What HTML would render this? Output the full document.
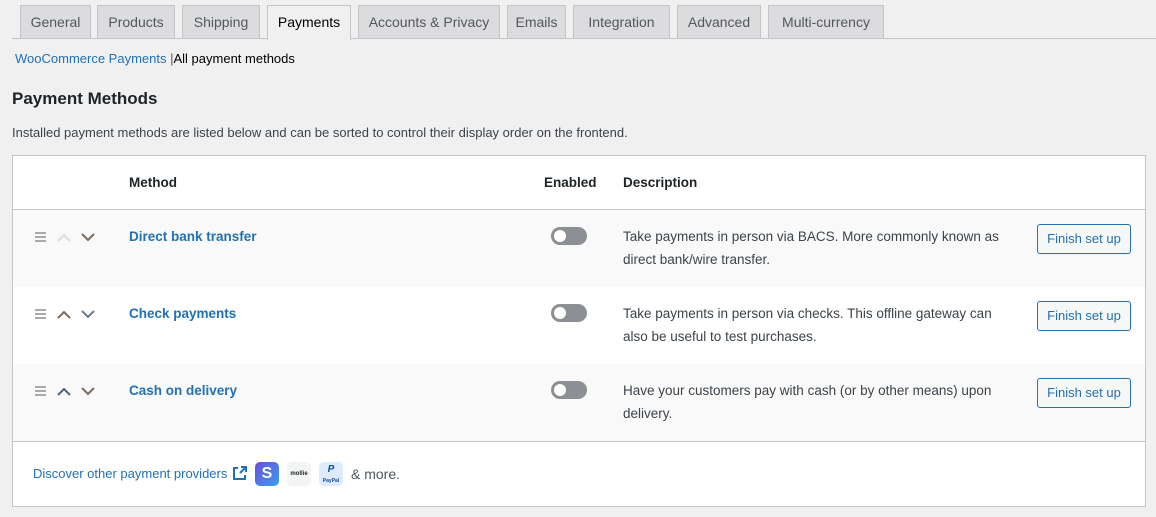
<!DOCTYPE html><html><head><style>
body{margin:0;background:#f0f0f1;font-family:"Liberation Sans",sans-serif;color:#1d2327;width:1156px;height:517px;overflow:hidden;position:relative;font-size:13px}
.a{position:absolute}
.tab{position:absolute;top:5px;height:33px;background:#dcdcde;border:1px solid #c3c4c7;border-bottom:none;box-sizing:border-box;font-size:14px;font-weight:400;color:#50575e;text-align:center;line-height:33px}
.tab.on{background:#f0f0f1;color:#000;height:35px}
.row{position:absolute;left:13px;width:1132px;height:77px}
.lnk{color:#2271b1;font-weight:700;font-size:13.5px}
.tog{position:absolute;width:36px;height:18px;border-radius:9px;background:#8c8f94;left:551px}
.tog:after{content:"";position:absolute;left:3px;top:3px;width:12px;height:12px;border-radius:6px;background:#fff}
.desc{position:absolute;left:623px;width:385px;font-size:13.5px;line-height:23px;color:#3c434a}
.btn{position:absolute;left:1037px;width:94px;height:30px;border:1px solid #2271b1;border-radius:3px;box-sizing:border-box;color:#2271b1;font-size:13px;text-align:center;line-height:28px;background:#f6f7f7}
</style></head><body>
<div class="a" style="left:12px;top:38px;width:1144px;height:1px;background:#c3c4c7"></div>
<div class="tab" style="left:20px;width:71px">General</div>
<div class="tab" style="left:97px;width:78px">Products</div>
<div class="tab" style="left:182px;width:78px">Shipping</div>
<div class="tab on" style="left:267px;width:84px">Payments</div>
<div class="tab" style="left:358px;width:142px">Accounts &amp; Privacy</div>
<div class="tab" style="left:507px;width:59px">Emails</div>
<div class="tab" style="left:573px;width:97px">Integration</div>
<div class="tab" style="left:677px;width:84px">Advanced</div>
<div class="tab" style="left:768px;width:116px">Multi-currency</div>
<div class="a" style="left:15px;top:51px;font-size:13px"><span style="color:#2271b1">WooCommerce Payments</span> <span style="color:#50575e">|</span><span style="color:#000">All payment methods</span></div>
<div class="a" style="left:12px;top:89px;font-size:17px;font-weight:600">Payment Methods</div>
<div class="a" style="left:12px;top:125px;font-size:13px;color:#3c434a">Installed payment methods are listed below and can be sorted to control their display order on the frontend.</div>
<div class="a" style="left:12px;top:155px;width:1134px;height:352px;background:#fff;border:1px solid #c3c4c7;box-sizing:border-box"></div>
<div class="a" style="left:129px;top:175px;font-size:13.5px;font-weight:600">Method</div>
<div class="a" style="left:544px;top:175px;font-size:13.5px;font-weight:600">Enabled</div>
<div class="a" style="left:623px;top:175px;font-size:13.5px;font-weight:600">Description</div>
<div class="a" style="left:13px;top:209px;width:1132px;height:1px;background:#c3c4c7"></div>
<div class="a" style="left:13px;top:441px;width:1132px;height:1px;background:#c3c4c7"></div>

<div class="row" style="top:210px;background:#f9f9f9"></div>
<div class="row" style="top:287px;background:#fff"></div>
<div class="row" style="top:364px;background:#f9f9f9"></div>

<svg class="a" style="left:30px;top:228px" width="80" height="180" fill="none" stroke-width="2">
<g stroke="#8c8f94" stroke-width="1.5"><path d="M5 5h11M5 9h11M5 13h11M5 82h11M5 86h11M5 90h11M5 159h11M5 163h11M5 167h11"/></g>
<path d="M28 13l6-6 6 6" stroke="#dcdcde"/><path d="M52 6l6 6 6-6" stroke="#7c6c5c"/>
<path d="M28 90l6-6 6 6" stroke="#7c6c5c"/><path d="M52 83l6 6 6-6" stroke="#6a7a94"/>
<path d="M28 167l6-6 6 6" stroke="#50627c"/><path d="M52 160l6 6 6-6" stroke="#7c6c5c"/>
</svg>
<div class="a lnk" style="left:129px;top:229px">Direct bank transfer</div>
<div class="a lnk" style="left:129px;top:306px">Check payments</div>
<div class="a lnk" style="left:129px;top:383px">Cash on delivery</div>
<div class="tog" style="top:227px"></div><div class="tog" style="top:304px"></div><div class="tog" style="top:381px"></div>
<div class="desc" style="top:225px">Take payments in person via BACS. More commonly known as direct bank/wire transfer.</div>
<div class="desc" style="top:302px">Take payments in person via checks. This offline gateway can also be useful to test purchases.</div>
<div class="desc" style="top:379px">Have your customers pay with cash (or by other means) upon delivery.</div>
<div class="btn" style="top:224px">Finish set up</div>
<div class="btn" style="top:301px">Finish set up</div>
<div class="btn" style="top:378px">Finish set up</div>

<div class="a" style="left:33px;top:466px;color:#2271b1;font-size:13px">Discover other payment providers</div>
<svg class="a" style="left:232px;top:466px" width="15" height="15" fill="none" stroke="#2271b1" stroke-width="2"><path d="M6 2H2v11h11V9M8 7l6-6M9 1h5v5"/></svg>
<div class="a" style="left:255px;top:462px;width:24px;height:24px;border-radius:5px;background:linear-gradient(135deg,#6a4cd6,#3aa0f0);color:#fff;font-weight:700;font-size:16px;text-align:center;line-height:24px">S</div>
<div class="a" style="left:287px;top:462px;width:24px;height:24px;border-radius:5px;background:#f3f4f4;font-size:6px;text-align:center;line-height:24px;font-weight:700">mollie</div>
<div class="a" style="left:319px;top:462px;width:24px;height:24px;border-radius:5px;background:#dcecfb;font-size:5px;text-align:center;color:#1b4aa0;font-weight:700;line-height:10px;padding-top:3px;box-sizing:border-box"><span style="font-size:10px;font-style:italic">P</span><br>PayPal</div>
<div class="a" style="left:351px;top:466px;color:#50575e;font-size:14px">&amp; more.</div>
</body></html>
